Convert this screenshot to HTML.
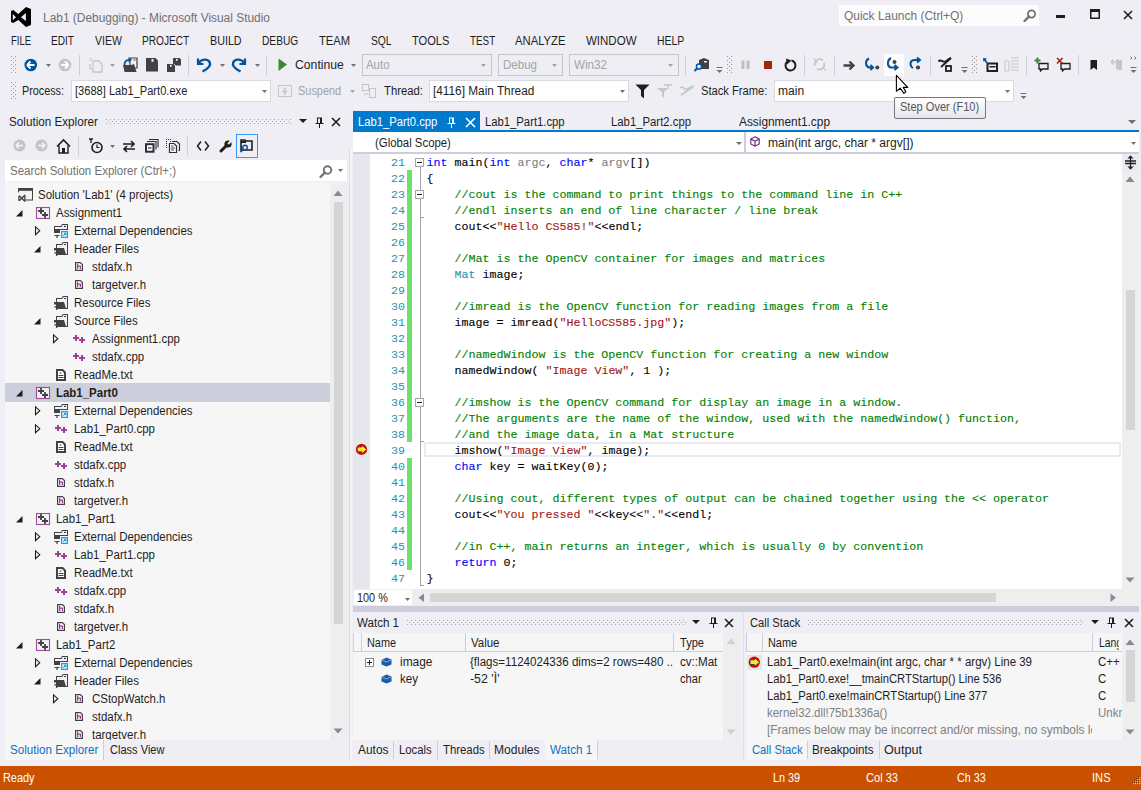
<!DOCTYPE html>
<html><head><meta charset="utf-8"><style>
html,body{margin:0;padding:0;}
body{width:1141px;height:790px;overflow:hidden;position:relative;background:#EEEEF4;font-family:"Liberation Sans",sans-serif;}
div,span,svg{position:absolute;}
span{white-space:pre;display:block;}
svg{overflow:visible;}
</style></head><body>
<svg style="left:10px;top:6px" width="23" height="23" viewBox="0 0 23 23"><path fill="#000" fill-rule="evenodd" d="M1,5 L3.2,4 L8.3,8 L16,1 L21,3 L21,19 L16,21 L8.3,14 L3.2,17 L1,16 Z M2.8,8 L2.8,14.3 L6,11.2 Z M11,11.2 L15.9,7 L15.9,15 Z"/></svg>
<span style="left:43px;top:12px;font-size:12px;line-height:13.80px;color:#717171;font-family:'Liberation Sans', sans-serif;transform:scaleX(0.9931);transform-origin:0 0;">Lab1 (Debugging) - Microsoft Visual Studio</span>
<div style="left:839px;top:5px;width:200px;height:21px;background:#FCFCFD;"></div>
<span style="left:844.2px;top:10px;font-size:12px;line-height:13.80px;color:#717171;font-family:'Liberation Sans', sans-serif;transform:scaleX(0.9966);transform-origin:0 0;">Quick Launch (Ctrl+Q)</span>
<svg style="left:1023px;top:9px" width="14" height="14" viewBox="0 0 14 14"><circle cx="8.5" cy="5" r="3.6" fill="none" stroke="#717171" stroke-width="1.8"/><path d="M6,7.5 L1.5,12" stroke="#717171" stroke-width="2.4" stroke-linecap="round"/></svg>
<div style="left:1056px;top:15px;width:9px;height:3px;background:#1E1E1E;"></div>
<svg style="left:1090px;top:9px" width="10" height="10" viewBox="0 0 10 10"><rect x="0.75" y="0.75" width="8.5" height="8.5" fill="none" stroke="#1E1E1E" stroke-width="1.5"/><rect x="0" y="0" width="10" height="3" fill="#1E1E1E"/></svg>
<svg style="left:1122.5px;top:9.5px" width="10" height="10" viewBox="0 0 10 10"><path d="M1,1 L9,9 M9,1 L1,9" stroke="#1E1E1E" stroke-width="1.6"/></svg>
<span style="left:10.8px;top:35px;font-size:12px;line-height:13.80px;color:#1E1E1E;font-family:'Liberation Sans', sans-serif;transform:scaleX(0.7971);transform-origin:0 0;">FILE</span>
<span style="left:51.1px;top:35px;font-size:12px;line-height:13.80px;color:#1E1E1E;font-family:'Liberation Sans', sans-serif;transform:scaleX(0.8414);transform-origin:0 0;">EDIT</span>
<span style="left:94.7px;top:35px;font-size:12px;line-height:13.80px;color:#1E1E1E;font-family:'Liberation Sans', sans-serif;transform:scaleX(0.8739);transform-origin:0 0;">VIEW</span>
<span style="left:142px;top:35px;font-size:12px;line-height:13.80px;color:#1E1E1E;font-family:'Liberation Sans', sans-serif;transform:scaleX(0.8446);transform-origin:0 0;">PROJECT</span>
<span style="left:209.8px;top:35px;font-size:12px;line-height:13.80px;color:#1E1E1E;font-family:'Liberation Sans', sans-serif;transform:scaleX(0.8941);transform-origin:0 0;">BUILD</span>
<span style="left:261.9px;top:35px;font-size:12px;line-height:13.80px;color:#1E1E1E;font-family:'Liberation Sans', sans-serif;transform:scaleX(0.8506);transform-origin:0 0;">DEBUG</span>
<span style="left:319.3px;top:35px;font-size:12px;line-height:13.80px;color:#1E1E1E;font-family:'Liberation Sans', sans-serif;transform:scaleX(0.9300);transform-origin:0 0;">TEAM</span>
<span style="left:371px;top:35px;font-size:12px;line-height:13.80px;color:#1E1E1E;font-family:'Liberation Sans', sans-serif;transform:scaleX(0.8537);transform-origin:0 0;">SQL</span>
<span style="left:412px;top:35px;font-size:12px;line-height:13.80px;color:#1E1E1E;font-family:'Liberation Sans', sans-serif;transform:scaleX(0.9219);transform-origin:0 0;">TOOLS</span>
<span style="left:469.5px;top:35px;font-size:12px;line-height:13.80px;color:#1E1E1E;font-family:'Liberation Sans', sans-serif;transform:scaleX(0.8217);transform-origin:0 0;">TEST</span>
<span style="left:515.2px;top:35px;font-size:12px;line-height:13.80px;color:#1E1E1E;font-family:'Liberation Sans', sans-serif;transform:scaleX(0.9387);transform-origin:0 0;">ANALYZE</span>
<span style="left:586.2px;top:35px;font-size:12px;line-height:13.80px;color:#1E1E1E;font-family:'Liberation Sans', sans-serif;transform:scaleX(0.9591);transform-origin:0 0;">WINDOW</span>
<span style="left:657.2px;top:35px;font-size:12px;line-height:13.80px;color:#1E1E1E;font-family:'Liberation Sans', sans-serif;transform:scaleX(0.8677);transform-origin:0 0;">HELP</span>
<div style="left:11px;top:56px;width:5px;height:18px;background-image:radial-gradient(circle at 0.5px 0.5px,#999999 0.6px,transparent 0.8px);background-size:4px 4px"></div>
<div style="left:13px;top:58px;width:3px;height:16px;background-image:radial-gradient(circle at 0.5px 0.5px,#999999 0.6px,transparent 0.8px);background-size:4px 4px"></div>
<svg style="left:24px;top:58px" width="14" height="14" viewBox="0 0 14 14"><circle cx="6.75" cy="7" r="6.3" fill="#00539C"/><path d="M3,7 L6.5,3.5 M3,7 L6.5,10.5 M3,7 H10.5" stroke="#fff" stroke-width="1.9" fill="none"/></svg>
<svg style="left:45.5px;top:64px" width="5" height="3" viewBox="0 0 5 3"><path d="M0,0 L5,0 L2.5,3 Z" fill="#717171"/></svg>
<svg style="left:58px;top:58px" width="14" height="14" viewBox="0 0 14 14"><circle cx="7" cy="7" r="6.3" fill="#C4C4C4"/><path d="M10.5,7 L7,3.5 M10.5,7 L7,10.5 M10.5,7 H3" stroke="#fff" stroke-width="1.9" fill="none"/></svg>
<div style="left:79px;top:55px;width:1px;height:20px;background:#CCCEDB;"></div>
<svg style="left:88px;top:57px" width="15" height="16" viewBox="0 0 15 16"><path d="M5,4 H11 L14,7 V15 H5 Z" fill="none" stroke="#C6C6C6" stroke-width="1.3"/><path d="M2,7 V12 H4" fill="none" stroke="#C6C6C6" stroke-width="1.2"/><path d="M1,1 L4,4 M4,1 L1,4" stroke="#C6C6C6" stroke-width="1"/></svg>
<svg style="left:110.0px;top:64px" width="5" height="3" viewBox="0 0 5 3"><path d="M0,0 L5,0 L2.5,3 Z" fill="#A0A0A0"/></svg>
<svg style="left:122px;top:57px" width="16" height="16" viewBox="0 0 16 16"><path d="M8,1 H15 V11 H8 Z" fill="#F5EFF8" stroke="#424242" stroke-width="1.2"/><rect x="11.5" y="2.5" width="2" height="1" fill="#424242"/><path d="M1,8 H9.5 L12,7 L14.5,15 H2.5 Z" fill="#424242"/><path d="M2.5,8 C2.5,4.5 4,2.8 7.5,2.8" stroke="#00539C" stroke-width="1.8" fill="none"/><path d="M6.5,0 L10,2.8 L6.5,5.6 Z" fill="#00539C"/></svg>
<svg style="left:145px;top:57px" width="14" height="16" viewBox="0 0 14 16"><path d="M1,1 H10.5 L13,3.5 V14.5 H1 Z" fill="#424242"/><rect x="6.5" y="2" width="2" height="2.8" fill="#EEEEF4"/></svg>
<svg style="left:166px;top:56px" width="16" height="17" viewBox="0 0 16 17"><path d="M1,8 H7.5 L9,9.5 V16 H1 Z" fill="#424242"/><rect x="4" y="8.8" width="1.6" height="2" fill="#EEEEF4"/><path d="M7,2 H13.5 L15,3.5 V9.5 H9.5 L8.5,8 H7 Z" fill="#424242"/><rect x="10" y="2.8" width="1.6" height="2" fill="#EEEEF4"/><path d="M9.5,16 V9.5" stroke="#EEEEF4" stroke-width="0.8"/></svg>
<div style="left:188px;top:55px;width:1px;height:20px;background:#CCCEDB;"></div>
<svg style="left:196px;top:57px" width="16" height="16" viewBox="0 0 16 16"><path d="M2,1.5 V7 H7.5" stroke="#00539C" stroke-width="2.2" fill="none"/><path d="M2.8,6.2 C5,2 12,1.2 13.8,5.5 C15,8.5 11.5,12 6.5,14.5" stroke="#00539C" stroke-width="2.4" fill="none"/></svg>
<svg style="left:219.5px;top:64px" width="5" height="3" viewBox="0 0 5 3"><path d="M0,0 L5,0 L2.5,3 Z" fill="#717171"/></svg>
<svg style="left:231px;top:57px" width="16" height="16" viewBox="0 0 16 16"><path d="M14,1.5 V7 H8.5" stroke="#00539C" stroke-width="2.2" fill="none"/><path d="M13.2,6.2 C11,2 4,1.2 2.2,5.5 C1,8.5 4.5,12 9.5,14.5" stroke="#00539C" stroke-width="2.4" fill="none"/></svg>
<svg style="left:254.5px;top:64px" width="5" height="3" viewBox="0 0 5 3"><path d="M0,0 L5,0 L2.5,3 Z" fill="#717171"/></svg>
<div style="left:266px;top:55px;width:1px;height:20px;background:#CCCEDB;"></div>
<svg style="left:278px;top:58px" width="10" height="14" viewBox="0 0 10 14"><path d="M0.5,0.5 L9,6.5 L0.5,13 Z" fill="#388A34"/></svg>
<span style="left:295.3px;top:59px;font-size:12px;line-height:13.80px;color:#1E1E1E;font-family:'Liberation Sans', sans-serif;transform:scaleX(1.0180);transform-origin:0 0;">Continue</span>
<svg style="left:350.5px;top:64px" width="5" height="3" viewBox="0 0 5 3"><path d="M0,0 L5,0 L2.5,3 Z" fill="#717171"/></svg>
<div style="left:362px;top:54px;width:130px;height:22px;background:transparent;border:1px solid #C6C6C6;box-sizing:border-box"></div>
<span style="left:366.3px;top:59px;font-size:12px;line-height:13.80px;color:#A2A4A5;font-family:'Liberation Sans', sans-serif;transform:scaleX(0.9520);transform-origin:0 0;">Auto</span>
<svg style="left:481.0px;top:64px" width="5" height="3" viewBox="0 0 5 3"><path d="M0,0 L5,0 L2.5,3 Z" fill="#A2A4A5"/></svg>
<div style="left:498px;top:54px;width:65px;height:22px;background:transparent;border:1px solid #C6C6C6;box-sizing:border-box"></div>
<span style="left:502.6px;top:59px;font-size:12px;line-height:13.80px;color:#A2A4A5;font-family:'Liberation Sans', sans-serif;transform:scaleX(0.9615);transform-origin:0 0;">Debug</span>
<svg style="left:552.0px;top:64px" width="5" height="3" viewBox="0 0 5 3"><path d="M0,0 L5,0 L2.5,3 Z" fill="#A2A4A5"/></svg>
<div style="left:569px;top:54px;width:110px;height:22px;background:transparent;border:1px solid #C6C6C6;box-sizing:border-box"></div>
<span style="left:573.5px;top:59px;font-size:12px;line-height:13.80px;color:#A2A4A5;font-family:'Liberation Sans', sans-serif;transform:scaleX(0.9702);transform-origin:0 0;">Win32</span>
<svg style="left:668.0px;top:64px" width="5" height="3" viewBox="0 0 5 3"><path d="M0,0 L5,0 L2.5,3 Z" fill="#A2A4A5"/></svg>
<div style="left:685px;top:55px;width:1px;height:20px;background:#CCCEDB;"></div>
<svg style="left:694px;top:57px" width="16" height="15" viewBox="0 0 16 15"><path d="M5,3 L10,1 L15,3 V12 H5 Z" fill="#424242"/><rect x="10" y="4" width="3" height="1.5" fill="#EEEEF4"/><circle cx="5" cy="9.5" r="2.6" fill="#EEEEF4" stroke="#00539C" stroke-width="1.5"/><path d="M3,11.5 L0.5,14" stroke="#00539C" stroke-width="2"/></svg>
<svg style="left:716px;top:67px" width="7" height="7" viewBox="0 0 7 7"><rect x="0.5" y="0" width="6" height="1" fill="#717171"/><path d="M0.5,3 L6.5,3 L3.5,6 Z" fill="#717171"/></svg>
<div style="left:727px;top:56px;width:5px;height:18px;background-image:radial-gradient(circle at 0.5px 0.5px,#999999 0.6px,transparent 0.8px);background-size:4px 4px"></div>
<div style="left:729px;top:58px;width:3px;height:16px;background-image:radial-gradient(circle at 0.5px 0.5px,#999999 0.6px,transparent 0.8px);background-size:4px 4px"></div>
<svg style="left:741px;top:60px" width="10" height="10" viewBox="0 0 10 10"><rect x="0.5" y="0.5" width="3" height="8.5" fill="#BDBDBD"/><rect x="5.5" y="0.5" width="3" height="8.5" fill="#BDBDBD"/></svg>
<div style="left:764px;top:61px;width:8px;height:8px;background:#A1260D;"></div>
<svg style="left:783px;top:58px" width="14" height="14" viewBox="0 0 14 14"><path d="M4.5,3.5 A5,5 0 1 0 8.5,2.6" stroke="#1E1E1E" stroke-width="2" fill="none"/><path d="M3,0.5 L8.5,2.5 L4,6.5 Z" fill="#1E1E1E"/></svg>
<div style="left:804px;top:55px;width:1px;height:20px;background:#CCCEDB;"></div>
<svg style="left:812px;top:57px" width="16" height="15" viewBox="0 0 16 15"><path d="M3,9 A5,5 0 0 1 11,3.5 M12,6 A5,5 0 0 1 5,12" stroke="#C6C6C6" stroke-width="1.8" fill="none"/><path d="M2,1 L5,6 M11,10 L14,14" stroke="#C6C6C6" stroke-width="1.2"/></svg>
<div style="left:834px;top:55px;width:1px;height:20px;background:#CCCEDB;"></div>
<svg style="left:843px;top:60px" width="14" height="11" viewBox="0 0 14 11"><path d="M0.5,5.5 H10.5 M6.5,1.5 L10.5,5.5 L6.5,9.5" stroke="#424242" stroke-width="2.3" fill="none"/></svg>
<svg style="left:864px;top:57px" width="16" height="15" viewBox="0 0 16 15"><path d="M5,1.5 C1,3.5 1,9 5,10.5 L9,10.5 M6.5,8 L9,10.5 L6.5,13" stroke="#00539C" stroke-width="2" fill="none"/><circle cx="13.3" cy="10.5" r="2" fill="#424242"/></svg>
<div style="left:884px;top:54px;width:20px;height:22px;background:#FDFDFD;"></div>
<svg style="left:887px;top:57px" width="15" height="16" viewBox="0 0 15 16"><path d="M4,1 C0,3 0,9 3.5,10.5 L10,10.5 M7.5,8 L10.5,10.5 L7.5,13" stroke="#00539C" stroke-width="2" fill="none"/><circle cx="7.5" cy="5" r="2" fill="#424242"/></svg>
<svg style="left:909px;top:57px" width="14" height="15" viewBox="0 0 14 15"><path d="M4,11 C0.5,9 0.5,3.5 5,3 L11,3 M8,0.5 L11,3 L8,5.5" stroke="#00539C" stroke-width="2" fill="none"/><circle cx="9" cy="10.5" r="2.1" fill="#424242"/></svg>
<div style="left:930px;top:55px;width:1px;height:20px;background:#CCCEDB;"></div>
<svg style="left:937px;top:57px" width="17" height="16" viewBox="0 0 17 16"><path d="M1.5,4.5 C4,1.5 6,6 8.5,4.5 C11,3 12,1.5 14,1" stroke="#1E1E1E" stroke-width="2" fill="none"/><path d="M4,10 L14,1" stroke="#1E1E1E" stroke-width="1.8"/><rect x="9" y="9" width="5" height="5" fill="none" stroke="#1E1E1E" stroke-width="1.8"/></svg>
<svg style="left:961px;top:67px" width="7" height="7" viewBox="0 0 7 7"><rect x="0.5" y="0" width="6" height="1" fill="#717171"/><path d="M0.5,3 L6.5,3 L3.5,6 Z" fill="#717171"/></svg>
<div style="left:972px;top:56px;width:5px;height:18px;background-image:radial-gradient(circle at 0.5px 0.5px,#999999 0.6px,transparent 0.8px);background-size:4px 4px"></div>
<div style="left:974px;top:58px;width:3px;height:16px;background-image:radial-gradient(circle at 0.5px 0.5px,#999999 0.6px,transparent 0.8px);background-size:4px 4px"></div>
<svg style="left:983px;top:58px" width="15" height="14" viewBox="0 0 15 14"><rect x="4.5" y="5.5" width="9.5" height="7.5" fill="none" stroke="#1E1E1E" stroke-width="2"/><rect x="6.5" y="8" width="6" height="1.5" fill="#1E1E1E"/><path d="M1,1 L5,6" stroke="#00539C" stroke-width="1.6"/><path d="M0,0 L4,0.5 L0.5,4 Z" fill="#00539C"/></svg>
<svg style="left:1004px;top:57px" width="16" height="15" viewBox="0 0 16 15"><path d="M1,4 H5 V14 H1 Z M7,1 H15 M7,4 H15 M7,7 H15 M7,10 H15 M7,13 H15" stroke="#C6C6C6" stroke-width="1" fill="none"/></svg>
<div style="left:1026px;top:55px;width:1px;height:20px;background:#CCCEDB;"></div>
<svg style="left:1034px;top:57px" width="16" height="15" viewBox="0 0 16 15"><path d="M5,6.5 H14 V12 H8.5 L6.5,14 V12 H5 Z" fill="none" stroke="#1E1E1E" stroke-width="1.3"/><path d="M0.5,3.5 H6.5 M3.5,0.5 V6.5" stroke="#388A34" stroke-width="2"/></svg>
<svg style="left:1056px;top:57px" width="16" height="15" viewBox="0 0 16 15"><path d="M5,6.5 H14 V12 H8.5 L6.5,14 V12 H5 Z" fill="none" stroke="#1E1E1E" stroke-width="1.3"/><path d="M1,1 L6.5,6.5 M6.5,1 L1,6.5" stroke="#A1260D" stroke-width="1.6"/></svg>
<div style="left:1078px;top:55px;width:1px;height:20px;background:#CCCEDB;"></div>
<svg style="left:1090px;top:60px" width="8" height="11" viewBox="0 0 8 11"><path d="M0.5,0 H7 V10 L3.75,7.5 L0.5,10 Z" fill="#1E1E1E"/></svg>
<svg style="left:1110px;top:57px" width="13" height="16" viewBox="0 0 13 16"><path d="M6,2 V12 L9,13 V3 Z" fill="#C6C6C6"/><path d="M1,5 H6 M1,5 L3.5,2.5 M1,5 L3.5,7.5" stroke="#C6C6C6" stroke-width="1.5"/><rect x="8" y="3" width="4" height="10" fill="#C6C6C6"/></svg>
<svg style="left:1130px;top:56px" width="8" height="5" viewBox="0 0 8 5"><path d="M0.5,0.5 L2,2 L0.5,3.5 M4.5,0.5 L6,2 L4.5,3.5" stroke="#717171" stroke-width="1" fill="none"/></svg>
<svg style="left:1130px;top:67px" width="7" height="7" viewBox="0 0 7 7"><rect x="0.5" y="0" width="6" height="1" fill="#717171"/><path d="M0.5,3 L6.5,3 L3.5,6 Z" fill="#717171"/></svg>
<div style="left:11px;top:82px;width:5px;height:18px;background-image:radial-gradient(circle at 0.5px 0.5px,#999999 0.6px,transparent 0.8px);background-size:4px 4px"></div>
<div style="left:13px;top:84px;width:3px;height:16px;background-image:radial-gradient(circle at 0.5px 0.5px,#999999 0.6px,transparent 0.8px);background-size:4px 4px"></div>
<span style="left:22.4px;top:85px;font-size:12px;line-height:13.80px;color:#1E1E1E;font-family:'Liberation Sans', sans-serif;transform:scaleX(0.8997);transform-origin:0 0;">Process:</span>
<div style="left:71px;top:80px;width:200px;height:22px;background:#FFFFFF;border:1px solid #DADAE0;box-sizing:border-box"></div>
<span style="left:74.9px;top:85px;font-size:12px;line-height:13.80px;color:#1E1E1E;font-family:'Liberation Sans', sans-serif;transform:scaleX(0.9248);transform-origin:0 0;">[3688] Lab1_Part0.exe</span>
<svg style="left:261.5px;top:90px" width="5" height="3" viewBox="0 0 5 3"><path d="M0,0 L5,0 L2.5,3 Z" fill="#717171"/></svg>
<svg style="left:278px;top:84px" width="15" height="14" viewBox="0 0 15 14"><rect x="0.5" y="1.5" width="13" height="11" fill="none" stroke="#C6C6C6" stroke-width="1"/><path d="M8,3.5 L5,7.5 H8.5 L6,11" stroke="#C6C6C6" stroke-width="1.3" fill="none"/></svg>
<span style="left:298.4px;top:85px;font-size:12px;line-height:13.80px;color:#A2A4A5;font-family:'Liberation Sans', sans-serif;transform:scaleX(0.9119);transform-origin:0 0;">Suspend</span>
<svg style="left:349.5px;top:90px" width="5" height="3" viewBox="0 0 5 3"><path d="M0,0 L5,0 L2.5,3 Z" fill="#A2A4A5"/></svg>
<svg style="left:362px;top:84px" width="15" height="14" viewBox="0 0 15 14"><rect x="0.5" y="0.5" width="6" height="6" fill="none" stroke="#C6C6C6"/><rect x="7.5" y="4.5" width="6" height="9" fill="none" stroke="#C6C6C6"/><path d="M2,10 H6" stroke="#C6C6C6"/></svg>
<span style="left:383.6px;top:85px;font-size:12px;line-height:13.80px;color:#1E1E1E;font-family:'Liberation Sans', sans-serif;transform:scaleX(0.9430);transform-origin:0 0;">Thread:</span>
<div style="left:429px;top:80px;width:200px;height:22px;background:#FFFFFF;border:1px solid #DADAE0;box-sizing:border-box"></div>
<span style="left:433px;top:85px;font-size:12px;line-height:13.80px;color:#1E1E1E;font-family:'Liberation Sans', sans-serif;transform:scaleX(0.9839);transform-origin:0 0;">[4116] Main Thread</span>
<svg style="left:619.5px;top:90px" width="5" height="3" viewBox="0 0 5 3"><path d="M0,0 L5,0 L2.5,3 Z" fill="#717171"/></svg>
<svg style="left:635px;top:84px" width="15" height="15" viewBox="0 0 15 15"><path d="M0.5,0.5 H14.5 L9,6 V14.5 L6,12 V6 Z" fill="#1E1E1E"/></svg>
<svg style="left:656px;top:84px" width="17" height="15" viewBox="0 0 17 15"><path d="M1,4 H12 L8,8 V14 L6,12 V8 Z" fill="#C6C6C6"/><path d="M8,1 H16 M12,1 V5" stroke="#C6C6C6" stroke-width="1.3"/></svg>
<svg style="left:679px;top:84px" width="16" height="15" viewBox="0 0 16 15"><path d="M1,4 C4,1 6,7 8.5,5 C11,3 12,2 15,2 M2,11 L14,3" stroke="#C6C6C6" stroke-width="1.6" fill="none"/></svg>
<span style="left:701.3px;top:85px;font-size:12px;line-height:13.80px;color:#1E1E1E;font-family:'Liberation Sans', sans-serif;transform:scaleX(0.9292);transform-origin:0 0;">Stack Frame:</span>
<div style="left:774px;top:80px;width:240px;height:22px;background:#FFFFFF;border:1px solid #DADAE0;box-sizing:border-box"></div>
<span style="left:778.3px;top:85px;font-size:12px;line-height:13.80px;color:#1E1E1E;font-family:'Liberation Sans', sans-serif;transform:scaleX(1.0035);transform-origin:0 0;">main</span>
<svg style="left:1004.5px;top:90px" width="5" height="3" viewBox="0 0 5 3"><path d="M0,0 L5,0 L2.5,3 Z" fill="#717171"/></svg>
<svg style="left:1020px;top:93px" width="7" height="7" viewBox="0 0 7 7"><rect x="0.5" y="0" width="6" height="1" fill="#717171"/><path d="M0.5,3 L6.5,3 L3.5,6 Z" fill="#717171"/></svg>
<span style="left:9.2px;top:116px;font-size:12px;line-height:13.80px;color:#1E1E1E;font-family:'Liberation Sans', sans-serif;transform:scaleX(0.9739);transform-origin:0 0;">Solution Explorer</span>
<div style="left:106px;top:119px;width:186px;height:6px;background-image:radial-gradient(circle at 0.5px 0.5px,#A8A8B0 0.6px,transparent 0.8px);background-size:4px 4px"></div>
<div style="left:108px;top:121px;width:184px;height:4px;background-image:radial-gradient(circle at 0.5px 0.5px,#A8A8B0 0.6px,transparent 0.8px);background-size:4px 4px"></div>
<svg style="left:299px;top:119px" width="9" height="5" viewBox="0 0 9 5"><path d="M0,0 H8 L4,4 Z" fill="#1E1E1E"/></svg>
<svg style="left:315px;top:117px" width="9" height="11" viewBox="0 0 9 11"><path d="M2,0.5 H7 V6 H8.5 V7 H5 V11 H4 V7 H0.5 V6 H2 Z M3,1.5 V6 H6 V1.5 Z" fill="#1E1E1E" fill-rule="evenodd"/><rect x="5" y="1" width="1" height="5" fill="#1E1E1E"/></svg>
<svg style="left:331px;top:117px" width="10" height="10" viewBox="0 0 10 10"><path d="M1,1 L9,9 M9,1 L1,9" stroke="#1E1E1E" stroke-width="1.6"/></svg>
<svg style="left:13px;top:139px" width="14" height="14" viewBox="0 0 14 14"><circle cx="6.5" cy="6.5" r="6" fill="#C4C4C4"/><path d="M3,6.5 L6,3.5 M3,6.5 L6,9.5 M3,6.5 H10" stroke="#F5F5F5" stroke-width="1.7" fill="none"/></svg>
<svg style="left:35px;top:139px" width="14" height="14" viewBox="0 0 14 14"><circle cx="6.5" cy="6.5" r="6" fill="#C4C4C4"/><path d="M10,6.5 L7,3.5 M10,6.5 L7,9.5 M10,6.5 H3" stroke="#F5F5F5" stroke-width="1.7" fill="none"/></svg>
<svg style="left:56px;top:139px" width="16" height="15" viewBox="0 0 16 15"><path d="M1,7.5 L7.5,1 L14,7.5" stroke="#1E1E1E" stroke-width="1.6" fill="none"/><path d="M3,6.5 V14 H12 V6.5" stroke="#1E1E1E" stroke-width="1.4" fill="none"/><rect x="6" y="9" width="3" height="5" fill="#1E1E1E"/></svg>
<div style="left:78px;top:136px;width:1px;height:20px;background:#CCCEDB;"></div>
<svg style="left:88px;top:138px" width="16" height="16" viewBox="0 0 16 16"><circle cx="9" cy="9.5" r="5" fill="none" stroke="#1E1E1E" stroke-width="1.6"/><path d="M9,6.5 V9.5 H11.5" stroke="#1E1E1E" stroke-width="1.2" fill="none"/><path d="M1,1 H5 M3,1 V5" stroke="#1E1E1E" stroke-width="1.3"/></svg>
<svg style="left:109.5px;top:145px" width="5" height="3" viewBox="0 0 5 3"><path d="M0,0 L5,0 L2.5,3 Z" fill="#717171"/></svg>
<svg style="left:122px;top:140px" width="14" height="13" viewBox="0 0 14 13"><path d="M1,4 H12 M9,1 L12,4 L9,7 M13,9 H2 M5,6 L2,9 L5,12" stroke="#1E1E1E" stroke-width="1.6" fill="none"/></svg>
<svg style="left:144px;top:138px" width="16" height="16" viewBox="0 0 16 16"><rect x="2" y="6.2" width="7.5" height="7.5" fill="#FFFFFF" stroke="#2D2D30" stroke-width="2"/><path d="M3,3.5 H12 V11.5 M5,1.5 H14 V9.5" stroke="#2D2D30" stroke-width="1.1" fill="none"/><rect x="4" y="9.3" width="3.5" height="1.3" fill="#00539C"/></svg>
<svg style="left:165px;top:138px" width="16" height="16" viewBox="0 0 16 16"><path d="M7,3.5 H12 L14.5,6 V12.5 H13.5" stroke="#2D2D30" stroke-width="1.1" fill="none"/><path d="M4.5,5.5 H9 L11.5,8 V14.5 H4.5 Z" fill="#FFFFFF" stroke="#2D2D30" stroke-width="1.2"/><path d="M6,8 H8.5 M6,10 H10 M6,12 H9" stroke="#2D2D30" stroke-width="0.9"/><g fill="#2D2D30"><rect x="1" y="1" width="1" height="1"/><rect x="3" y="1" width="1" height="1"/><rect x="5" y="1" width="1" height="1"/><rect x="1" y="3" width="1" height="1"/><rect x="5" y="3" width="1" height="1"/><rect x="1" y="5" width="1" height="1"/><rect x="1" y="7" width="1" height="1"/><rect x="1" y="9" width="1" height="1"/></g></svg>
<div style="left:187px;top:136px;width:1px;height:20px;background:#CCCEDB;"></div>
<svg style="left:196px;top:140px" width="14" height="12" viewBox="0 0 14 12"><path d="M5,1.5 L1.5,6 L5,10.5 M9,1.5 L12.5,6 L9,10.5" stroke="#1E1E1E" stroke-width="1.5" fill="none"/></svg>
<svg style="left:219px;top:139px" width="14" height="14" viewBox="0 0 14 14"><path d="M2,12 L7,7" stroke="#1E1E1E" stroke-width="3" stroke-linecap="round"/><circle cx="9" cy="5" r="3.6" fill="#1E1E1E"/><path d="M9,5 L13,1" stroke="#EEEEF4" stroke-width="2"/></svg>
<div style="left:236px;top:134px;width:22px;height:24px;background:#EEEEF4;border:1px solid #3399FF;box-sizing:border-box"></div>
<svg style="left:239px;top:137px" width="17" height="17" viewBox="0 0 17 17"><path d="M2,3 H6 L7,4 H13 V13 H2 Z" fill="none" stroke="#1E1E1E" stroke-width="1.6"/><rect x="2" y="4" width="5" height="2" fill="#1E1E1E"/><circle cx="6" cy="10.5" r="2.3" fill="#EEEEF4" stroke="#00539C" stroke-width="1.4"/><path d="M4.3,12.2 L1.5,15" stroke="#00539C" stroke-width="1.8"/></svg>
<div style="left:5px;top:160px;width:342px;height:21px;background:#FFFFFF;"></div>
<span style="left:10.4px;top:165px;font-size:12px;line-height:13.80px;color:#717171;font-family:'Liberation Sans', sans-serif;transform:scaleX(0.9592);transform-origin:0 0;">Search Solution Explorer (Ctrl+;)</span>
<svg style="left:318px;top:164px" width="16" height="16" viewBox="0 0 16 16"><circle cx="9.5" cy="6" r="3.8" fill="none" stroke="#717171" stroke-width="1.9"/><path d="M7,8.5 L2.5,13" stroke="#717171" stroke-width="2.4" stroke-linecap="round"/></svg>
<svg style="left:338.0px;top:169px" width="5" height="3" viewBox="0 0 5 3"><path d="M0,0 L5,0 L2.5,3 Z" fill="#717171"/></svg>
<div style="left:5px;top:182px;width:325px;height:558px;background:#F6F6F6;"></div>
<div style="left:330px;top:185px;width:17px;height:555px;background:#EEEEEF;"></div>
<svg style="left:333px;top:190px" width="11" height="7" viewBox="0 0 11 7"><path d="M0.5,6 L5,0.5 L9.5,6 Z" fill="#868999"/></svg>
<div style="left:334px;top:202px;width:9px;height:422px;background:#D5D5D5;"></div>
<svg style="left:333px;top:728px" width="11" height="6" viewBox="0 0 11 6"><path d="M0.5,0.5 H9.5 L5,5.5 Z" fill="#868999"/></svg>
<div style="left:5px;top:383px;width:325px;height:19px;background:#CCCEDB;"></div>
<div style="left:5px;top:182px;width:325px;height:558px;overflow:hidden">
<svg style="left:12.5px;top:6.0px" width="15" height="14" viewBox="0 0 15 14"><rect x="0.5" y="0.5" width="14" height="11.5" fill="#F5EFF8" stroke="#424242" stroke-width="1"/><rect x="0" y="0" width="15" height="2.8" fill="#424242"/><rect x="0" y="4.5" width="7.5" height="9.5" fill="#F6F6F6"/><path fill="#424242" fill-rule="evenodd" d="M0.3,8 L1.6,7.2 L3.8,9.2 L6.5,6.5 L7.5,7 V13.5 L6.5,14 L3.8,11.3 L1.6,13.3 L0.3,12.5 Z M1.6,9 V11.5 L2.9,10.2 Z M4.8,10.2 L6.2,8.8 V11.7 Z"/></svg>
<span style="left:33.0px;top:7.0px;font-size:12px;line-height:13.80px;color:#1E1E1E;font-family:'Liberation Sans', sans-serif;transform:scaleX(0.9550);transform-origin:0 0;">Solution &#x27;Lab1&#x27; (4 projects)</span>
<svg style="left:11.0px;top:27.5px" width="8" height="7" viewBox="0 0 8 7"><path d="M0,6.5 H6.5 V0 Z" fill="#1E1E1E"/></svg>
<svg style="left:31.0px;top:25.0px" width="14" height="12" viewBox="0 0 14 12"><rect x="0.5" y="0.5" width="13" height="11" fill="#F5EFF8" stroke="#9B4F96" stroke-width="1.1"/><path d="M2,4 H8 M5,1 V7 M6,8 H12 M9,5 V11" stroke="#424242" stroke-width="1.8"/></svg>
<span style="left:51.0px;top:25.0px;font-size:12px;line-height:13.80px;color:#1E1E1E;font-family:'Liberation Sans', sans-serif;transform:scaleX(0.9550);transform-origin:0 0;">Assignment1</span>
<svg style="left:28.5px;top:44.0px" width="7" height="10" viewBox="0 0 7 10"><path d="M1.5,0.8 L5.8,4.7 L1.5,8.7 Z" fill="none" stroke="#1E1E1E" stroke-width="1.1"/></svg>
<svg style="left:49.0px;top:42.0px" width="14" height="14" viewBox="0 0 14 14"><path d="M0,2 H7 L8,0 H14 V6 H0 Z" fill="#424242"/><path d="M1,3 H7.5 L8.5,1 H13 V5 H1 Z" fill="#F5EFF8"/><rect x="10" y="1.8" width="2" height="1.2" fill="#424242"/><rect x="0" y="6" width="6" height="3" fill="#424242"/><path d="M0.5,11.5 H5.5 M3,11.5 V14" stroke="#424242" stroke-width="1.2"/><rect x="7.65" y="7.65" width="5.7" height="5.7" fill="#FFFFFF" stroke="#1BA1E2" stroke-width="1.3"/><path d="M9.3,11.7 L11.8,9.2 M9.8,9.2 H11.8 V11.2" stroke="#1BA1E2" stroke-width="1.1" fill="none"/></svg>
<span style="left:69.0px;top:43.0px;font-size:12px;line-height:13.80px;color:#1E1E1E;font-family:'Liberation Sans', sans-serif;transform:scaleX(0.9550);transform-origin:0 0;">External Dependencies</span>
<svg style="left:29.0px;top:63.5px" width="8" height="7" viewBox="0 0 8 7"><path d="M0,6.5 H6.5 V0 Z" fill="#1E1E1E"/></svg>
<svg style="left:49.0px;top:60.0px" width="14" height="14" viewBox="0 0 14 14"><path d="M2,2 H7.5 L9,0 H14 V13 H2 Z" fill="#424242"/><path d="M3,3 H8 L9.5,1 H13 V12 H3 Z" fill="#F5EFF8"/><rect x="10" y="2" width="2" height="1" fill="#424242"/><path d="M0,6 H10 L12,12.5 H3 V8.5 H0 Z" fill="#424242"/><path d="M0.3,10.8 H5 M2.6,10.8 V14" stroke="#424242" stroke-width="1.3"/></svg>
<span style="left:69.0px;top:61.0px;font-size:12px;line-height:13.80px;color:#1E1E1E;font-family:'Liberation Sans', sans-serif;transform:scaleX(0.9550);transform-origin:0 0;">Header Files</span>
<svg style="left:70.0px;top:80.0px" width="8" height="9" viewBox="0 0 8 9"><path d="M0.6,0.6 H5.4 L7.4,2.6 V8.4 H0.6 Z" fill="#FFFFFF" stroke="#424242" stroke-width="1.2"/><path d="M2.6,1.8 V7 M2.6,4.2 H5.4 V7" stroke="#9B3F98" stroke-width="1.3" fill="none"/></svg>
<span style="left:87.0px;top:79.0px;font-size:12px;line-height:13.80px;color:#1E1E1E;font-family:'Liberation Sans', sans-serif;transform:scaleX(0.9550);transform-origin:0 0;">stdafx.h</span>
<svg style="left:70.0px;top:98.0px" width="8" height="9" viewBox="0 0 8 9"><path d="M0.6,0.6 H5.4 L7.4,2.6 V8.4 H0.6 Z" fill="#FFFFFF" stroke="#424242" stroke-width="1.2"/><path d="M2.6,1.8 V7 M2.6,4.2 H5.4 V7" stroke="#9B3F98" stroke-width="1.3" fill="none"/></svg>
<span style="left:87.0px;top:97.0px;font-size:12px;line-height:13.80px;color:#1E1E1E;font-family:'Liberation Sans', sans-serif;transform:scaleX(0.9550);transform-origin:0 0;">targetver.h</span>
<svg style="left:49.0px;top:114.0px" width="14" height="14" viewBox="0 0 14 14"><path d="M2,2 H7.5 L9,0 H14 V13 H2 Z" fill="#424242"/><path d="M3,3 H8 L9.5,1 H13 V12 H3 Z" fill="#F5EFF8"/><rect x="10" y="2" width="2" height="1" fill="#424242"/><path d="M0,6 H10 L12,12.5 H3 V8.5 H0 Z" fill="#424242"/><path d="M0.3,10.8 H5 M2.6,10.8 V14" stroke="#424242" stroke-width="1.3"/></svg>
<span style="left:69.0px;top:115.0px;font-size:12px;line-height:13.80px;color:#1E1E1E;font-family:'Liberation Sans', sans-serif;transform:scaleX(0.9550);transform-origin:0 0;">Resource Files</span>
<svg style="left:29.0px;top:135.5px" width="8" height="7" viewBox="0 0 8 7"><path d="M0,6.5 H6.5 V0 Z" fill="#1E1E1E"/></svg>
<svg style="left:49.0px;top:132.0px" width="14" height="14" viewBox="0 0 14 14"><path d="M2,2 H7.5 L9,0 H14 V13 H2 Z" fill="#424242"/><path d="M3,3 H8 L9.5,1 H13 V12 H3 Z" fill="#F5EFF8"/><rect x="10" y="2" width="2" height="1" fill="#424242"/><path d="M0,6 H10 L12,12.5 H3 V8.5 H0 Z" fill="#424242"/><path d="M0.3,10.8 H5 M2.6,10.8 V14" stroke="#424242" stroke-width="1.3"/></svg>
<span style="left:69.0px;top:133.0px;font-size:12px;line-height:13.80px;color:#1E1E1E;font-family:'Liberation Sans', sans-serif;transform:scaleX(0.9550);transform-origin:0 0;">Source Files</span>
<svg style="left:46.5px;top:152.0px" width="7" height="10" viewBox="0 0 7 10"><path d="M1.5,0.8 L5.8,4.7 L1.5,8.7 Z" fill="none" stroke="#1E1E1E" stroke-width="1.1"/></svg>
<svg style="left:68.0px;top:153.0px" width="12" height="8" viewBox="0 0 12 8"><g fill="#9B3F98"><rect x="0" y="2" width="6" height="2"/><rect x="2" y="0" width="2" height="6"/><rect x="6" y="4" width="6" height="2"/><rect x="8" y="2" width="2" height="6"/></g></svg>
<span style="left:87.0px;top:151.0px;font-size:12px;line-height:13.80px;color:#1E1E1E;font-family:'Liberation Sans', sans-serif;transform:scaleX(0.9550);transform-origin:0 0;">Assignment1.cpp</span>
<svg style="left:68.0px;top:171.0px" width="12" height="8" viewBox="0 0 12 8"><g fill="#9B3F98"><rect x="0" y="2" width="6" height="2"/><rect x="2" y="0" width="2" height="6"/><rect x="6" y="4" width="6" height="2"/><rect x="8" y="2" width="2" height="6"/></g></svg>
<span style="left:87.0px;top:169.0px;font-size:12px;line-height:13.80px;color:#1E1E1E;font-family:'Liberation Sans', sans-serif;transform:scaleX(0.9550);transform-origin:0 0;">stdafx.cpp</span>
<svg style="left:51.0px;top:187.0px" width="10" height="12" viewBox="0 0 10 12"><path d="M1,1 H6.5 L9,3.5 V11 H1 Z" fill="#FFFFFF" stroke="#424242" stroke-width="2"/><path d="M3.5,4 H5.5 M2.5,6.5 H7.5 M2.5,8.5 H7.5" stroke="#424242" stroke-width="1"/></svg>
<span style="left:69.0px;top:187.0px;font-size:12px;line-height:13.80px;color:#1E1E1E;font-family:'Liberation Sans', sans-serif;transform:scaleX(0.9550);transform-origin:0 0;">ReadMe.txt</span>
<svg style="left:11.0px;top:207.5px" width="8" height="7" viewBox="0 0 8 7"><path d="M0,6.5 H6.5 V0 Z" fill="#1E1E1E"/></svg>
<svg style="left:31.0px;top:205.0px" width="14" height="12" viewBox="0 0 14 12"><rect x="0.5" y="0.5" width="13" height="11" fill="#F5EFF8" stroke="#9B4F96" stroke-width="1.1"/><path d="M2,4 H8 M5,1 V7 M6,8 H12 M9,5 V11" stroke="#424242" stroke-width="1.8"/></svg>
<span style="left:51.0px;top:205.0px;font-size:12px;line-height:13.80px;color:#1E1E1E;font-family:'Liberation Sans', sans-serif;font-weight:bold;transform:scaleX(0.9550);transform-origin:0 0;">Lab1_Part0</span>
<svg style="left:28.5px;top:224.0px" width="7" height="10" viewBox="0 0 7 10"><path d="M1.5,0.8 L5.8,4.7 L1.5,8.7 Z" fill="none" stroke="#1E1E1E" stroke-width="1.1"/></svg>
<svg style="left:49.0px;top:222.0px" width="14" height="14" viewBox="0 0 14 14"><path d="M0,2 H7 L8,0 H14 V6 H0 Z" fill="#424242"/><path d="M1,3 H7.5 L8.5,1 H13 V5 H1 Z" fill="#F5EFF8"/><rect x="10" y="1.8" width="2" height="1.2" fill="#424242"/><rect x="0" y="6" width="6" height="3" fill="#424242"/><path d="M0.5,11.5 H5.5 M3,11.5 V14" stroke="#424242" stroke-width="1.2"/><rect x="7.65" y="7.65" width="5.7" height="5.7" fill="#FFFFFF" stroke="#1BA1E2" stroke-width="1.3"/><path d="M9.3,11.7 L11.8,9.2 M9.8,9.2 H11.8 V11.2" stroke="#1BA1E2" stroke-width="1.1" fill="none"/></svg>
<span style="left:69.0px;top:223.0px;font-size:12px;line-height:13.80px;color:#1E1E1E;font-family:'Liberation Sans', sans-serif;transform:scaleX(0.9550);transform-origin:0 0;">External Dependencies</span>
<svg style="left:28.5px;top:242.0px" width="7" height="10" viewBox="0 0 7 10"><path d="M1.5,0.8 L5.8,4.7 L1.5,8.7 Z" fill="none" stroke="#1E1E1E" stroke-width="1.1"/></svg>
<svg style="left:50.0px;top:243.0px" width="12" height="8" viewBox="0 0 12 8"><g fill="#9B3F98"><rect x="0" y="2" width="6" height="2"/><rect x="2" y="0" width="2" height="6"/><rect x="6" y="4" width="6" height="2"/><rect x="8" y="2" width="2" height="6"/></g></svg>
<span style="left:69.0px;top:241.0px;font-size:12px;line-height:13.80px;color:#1E1E1E;font-family:'Liberation Sans', sans-serif;transform:scaleX(0.9550);transform-origin:0 0;">Lab1_Part0.cpp</span>
<svg style="left:51.0px;top:259.0px" width="10" height="12" viewBox="0 0 10 12"><path d="M1,1 H6.5 L9,3.5 V11 H1 Z" fill="#FFFFFF" stroke="#424242" stroke-width="2"/><path d="M3.5,4 H5.5 M2.5,6.5 H7.5 M2.5,8.5 H7.5" stroke="#424242" stroke-width="1"/></svg>
<span style="left:69.0px;top:259.0px;font-size:12px;line-height:13.80px;color:#1E1E1E;font-family:'Liberation Sans', sans-serif;transform:scaleX(0.9550);transform-origin:0 0;">ReadMe.txt</span>
<svg style="left:50.0px;top:279.0px" width="12" height="8" viewBox="0 0 12 8"><g fill="#9B3F98"><rect x="0" y="2" width="6" height="2"/><rect x="2" y="0" width="2" height="6"/><rect x="6" y="4" width="6" height="2"/><rect x="8" y="2" width="2" height="6"/></g></svg>
<span style="left:69.0px;top:277.0px;font-size:12px;line-height:13.80px;color:#1E1E1E;font-family:'Liberation Sans', sans-serif;transform:scaleX(0.9550);transform-origin:0 0;">stdafx.cpp</span>
<svg style="left:52.0px;top:296.0px" width="8" height="9" viewBox="0 0 8 9"><path d="M0.6,0.6 H5.4 L7.4,2.6 V8.4 H0.6 Z" fill="#FFFFFF" stroke="#424242" stroke-width="1.2"/><path d="M2.6,1.8 V7 M2.6,4.2 H5.4 V7" stroke="#9B3F98" stroke-width="1.3" fill="none"/></svg>
<span style="left:69.0px;top:295.0px;font-size:12px;line-height:13.80px;color:#1E1E1E;font-family:'Liberation Sans', sans-serif;transform:scaleX(0.9550);transform-origin:0 0;">stdafx.h</span>
<svg style="left:52.0px;top:314.0px" width="8" height="9" viewBox="0 0 8 9"><path d="M0.6,0.6 H5.4 L7.4,2.6 V8.4 H0.6 Z" fill="#FFFFFF" stroke="#424242" stroke-width="1.2"/><path d="M2.6,1.8 V7 M2.6,4.2 H5.4 V7" stroke="#9B3F98" stroke-width="1.3" fill="none"/></svg>
<span style="left:69.0px;top:313.0px;font-size:12px;line-height:13.80px;color:#1E1E1E;font-family:'Liberation Sans', sans-serif;transform:scaleX(0.9550);transform-origin:0 0;">targetver.h</span>
<svg style="left:11.0px;top:333.5px" width="8" height="7" viewBox="0 0 8 7"><path d="M0,6.5 H6.5 V0 Z" fill="#1E1E1E"/></svg>
<svg style="left:31.0px;top:331.0px" width="14" height="12" viewBox="0 0 14 12"><rect x="0.5" y="0.5" width="13" height="11" fill="#F5EFF8" stroke="#9B4F96" stroke-width="1.1"/><path d="M2,4 H8 M5,1 V7 M6,8 H12 M9,5 V11" stroke="#424242" stroke-width="1.8"/></svg>
<span style="left:51.0px;top:331.0px;font-size:12px;line-height:13.80px;color:#1E1E1E;font-family:'Liberation Sans', sans-serif;transform:scaleX(0.9550);transform-origin:0 0;">Lab1_Part1</span>
<svg style="left:28.5px;top:350.0px" width="7" height="10" viewBox="0 0 7 10"><path d="M1.5,0.8 L5.8,4.7 L1.5,8.7 Z" fill="none" stroke="#1E1E1E" stroke-width="1.1"/></svg>
<svg style="left:49.0px;top:348.0px" width="14" height="14" viewBox="0 0 14 14"><path d="M0,2 H7 L8,0 H14 V6 H0 Z" fill="#424242"/><path d="M1,3 H7.5 L8.5,1 H13 V5 H1 Z" fill="#F5EFF8"/><rect x="10" y="1.8" width="2" height="1.2" fill="#424242"/><rect x="0" y="6" width="6" height="3" fill="#424242"/><path d="M0.5,11.5 H5.5 M3,11.5 V14" stroke="#424242" stroke-width="1.2"/><rect x="7.65" y="7.65" width="5.7" height="5.7" fill="#FFFFFF" stroke="#1BA1E2" stroke-width="1.3"/><path d="M9.3,11.7 L11.8,9.2 M9.8,9.2 H11.8 V11.2" stroke="#1BA1E2" stroke-width="1.1" fill="none"/></svg>
<span style="left:69.0px;top:349.0px;font-size:12px;line-height:13.80px;color:#1E1E1E;font-family:'Liberation Sans', sans-serif;transform:scaleX(0.9550);transform-origin:0 0;">External Dependencies</span>
<svg style="left:28.5px;top:368.0px" width="7" height="10" viewBox="0 0 7 10"><path d="M1.5,0.8 L5.8,4.7 L1.5,8.7 Z" fill="none" stroke="#1E1E1E" stroke-width="1.1"/></svg>
<svg style="left:50.0px;top:369.0px" width="12" height="8" viewBox="0 0 12 8"><g fill="#9B3F98"><rect x="0" y="2" width="6" height="2"/><rect x="2" y="0" width="2" height="6"/><rect x="6" y="4" width="6" height="2"/><rect x="8" y="2" width="2" height="6"/></g></svg>
<span style="left:69.0px;top:367.0px;font-size:12px;line-height:13.80px;color:#1E1E1E;font-family:'Liberation Sans', sans-serif;transform:scaleX(0.9550);transform-origin:0 0;">Lab1_Part1.cpp</span>
<svg style="left:51.0px;top:385.0px" width="10" height="12" viewBox="0 0 10 12"><path d="M1,1 H6.5 L9,3.5 V11 H1 Z" fill="#FFFFFF" stroke="#424242" stroke-width="2"/><path d="M3.5,4 H5.5 M2.5,6.5 H7.5 M2.5,8.5 H7.5" stroke="#424242" stroke-width="1"/></svg>
<span style="left:69.0px;top:385.0px;font-size:12px;line-height:13.80px;color:#1E1E1E;font-family:'Liberation Sans', sans-serif;transform:scaleX(0.9550);transform-origin:0 0;">ReadMe.txt</span>
<svg style="left:50.0px;top:405.0px" width="12" height="8" viewBox="0 0 12 8"><g fill="#9B3F98"><rect x="0" y="2" width="6" height="2"/><rect x="2" y="0" width="2" height="6"/><rect x="6" y="4" width="6" height="2"/><rect x="8" y="2" width="2" height="6"/></g></svg>
<span style="left:69.0px;top:403.0px;font-size:12px;line-height:13.80px;color:#1E1E1E;font-family:'Liberation Sans', sans-serif;transform:scaleX(0.9550);transform-origin:0 0;">stdafx.cpp</span>
<svg style="left:52.0px;top:422.0px" width="8" height="9" viewBox="0 0 8 9"><path d="M0.6,0.6 H5.4 L7.4,2.6 V8.4 H0.6 Z" fill="#FFFFFF" stroke="#424242" stroke-width="1.2"/><path d="M2.6,1.8 V7 M2.6,4.2 H5.4 V7" stroke="#9B3F98" stroke-width="1.3" fill="none"/></svg>
<span style="left:69.0px;top:421.0px;font-size:12px;line-height:13.80px;color:#1E1E1E;font-family:'Liberation Sans', sans-serif;transform:scaleX(0.9550);transform-origin:0 0;">stdafx.h</span>
<svg style="left:52.0px;top:440.0px" width="8" height="9" viewBox="0 0 8 9"><path d="M0.6,0.6 H5.4 L7.4,2.6 V8.4 H0.6 Z" fill="#FFFFFF" stroke="#424242" stroke-width="1.2"/><path d="M2.6,1.8 V7 M2.6,4.2 H5.4 V7" stroke="#9B3F98" stroke-width="1.3" fill="none"/></svg>
<span style="left:69.0px;top:439.0px;font-size:12px;line-height:13.80px;color:#1E1E1E;font-family:'Liberation Sans', sans-serif;transform:scaleX(0.9550);transform-origin:0 0;">targetver.h</span>
<svg style="left:11.0px;top:459.5px" width="8" height="7" viewBox="0 0 8 7"><path d="M0,6.5 H6.5 V0 Z" fill="#1E1E1E"/></svg>
<svg style="left:31.0px;top:457.0px" width="14" height="12" viewBox="0 0 14 12"><rect x="0.5" y="0.5" width="13" height="11" fill="#F5EFF8" stroke="#9B4F96" stroke-width="1.1"/><path d="M2,4 H8 M5,1 V7 M6,8 H12 M9,5 V11" stroke="#424242" stroke-width="1.8"/></svg>
<span style="left:51.0px;top:457.0px;font-size:12px;line-height:13.80px;color:#1E1E1E;font-family:'Liberation Sans', sans-serif;transform:scaleX(0.9550);transform-origin:0 0;">Lab1_Part2</span>
<svg style="left:28.5px;top:476.0px" width="7" height="10" viewBox="0 0 7 10"><path d="M1.5,0.8 L5.8,4.7 L1.5,8.7 Z" fill="none" stroke="#1E1E1E" stroke-width="1.1"/></svg>
<svg style="left:49.0px;top:474.0px" width="14" height="14" viewBox="0 0 14 14"><path d="M0,2 H7 L8,0 H14 V6 H0 Z" fill="#424242"/><path d="M1,3 H7.5 L8.5,1 H13 V5 H1 Z" fill="#F5EFF8"/><rect x="10" y="1.8" width="2" height="1.2" fill="#424242"/><rect x="0" y="6" width="6" height="3" fill="#424242"/><path d="M0.5,11.5 H5.5 M3,11.5 V14" stroke="#424242" stroke-width="1.2"/><rect x="7.65" y="7.65" width="5.7" height="5.7" fill="#FFFFFF" stroke="#1BA1E2" stroke-width="1.3"/><path d="M9.3,11.7 L11.8,9.2 M9.8,9.2 H11.8 V11.2" stroke="#1BA1E2" stroke-width="1.1" fill="none"/></svg>
<span style="left:69.0px;top:475.0px;font-size:12px;line-height:13.80px;color:#1E1E1E;font-family:'Liberation Sans', sans-serif;transform:scaleX(0.9550);transform-origin:0 0;">External Dependencies</span>
<svg style="left:29.0px;top:495.5px" width="8" height="7" viewBox="0 0 8 7"><path d="M0,6.5 H6.5 V0 Z" fill="#1E1E1E"/></svg>
<svg style="left:49.0px;top:492.0px" width="14" height="14" viewBox="0 0 14 14"><path d="M2,2 H7.5 L9,0 H14 V13 H2 Z" fill="#424242"/><path d="M3,3 H8 L9.5,1 H13 V12 H3 Z" fill="#F5EFF8"/><rect x="10" y="2" width="2" height="1" fill="#424242"/><path d="M0,6 H10 L12,12.5 H3 V8.5 H0 Z" fill="#424242"/><path d="M0.3,10.8 H5 M2.6,10.8 V14" stroke="#424242" stroke-width="1.3"/></svg>
<span style="left:69.0px;top:493.0px;font-size:12px;line-height:13.80px;color:#1E1E1E;font-family:'Liberation Sans', sans-serif;transform:scaleX(0.9550);transform-origin:0 0;">Header Files</span>
<svg style="left:46.5px;top:512.0px" width="7" height="10" viewBox="0 0 7 10"><path d="M1.5,0.8 L5.8,4.7 L1.5,8.7 Z" fill="none" stroke="#1E1E1E" stroke-width="1.1"/></svg>
<svg style="left:70.0px;top:512.0px" width="8" height="9" viewBox="0 0 8 9"><path d="M0.6,0.6 H5.4 L7.4,2.6 V8.4 H0.6 Z" fill="#FFFFFF" stroke="#424242" stroke-width="1.2"/><path d="M2.6,1.8 V7 M2.6,4.2 H5.4 V7" stroke="#9B3F98" stroke-width="1.3" fill="none"/></svg>
<span style="left:87.0px;top:511.0px;font-size:12px;line-height:13.80px;color:#1E1E1E;font-family:'Liberation Sans', sans-serif;transform:scaleX(0.9550);transform-origin:0 0;">CStopWatch.h</span>
<svg style="left:70.0px;top:530.0px" width="8" height="9" viewBox="0 0 8 9"><path d="M0.6,0.6 H5.4 L7.4,2.6 V8.4 H0.6 Z" fill="#FFFFFF" stroke="#424242" stroke-width="1.2"/><path d="M2.6,1.8 V7 M2.6,4.2 H5.4 V7" stroke="#9B3F98" stroke-width="1.3" fill="none"/></svg>
<span style="left:87.0px;top:529.0px;font-size:12px;line-height:13.80px;color:#1E1E1E;font-family:'Liberation Sans', sans-serif;transform:scaleX(0.9550);transform-origin:0 0;">stdafx.h</span>
<svg style="left:70.0px;top:548.0px" width="8" height="9" viewBox="0 0 8 9"><path d="M0.6,0.6 H5.4 L7.4,2.6 V8.4 H0.6 Z" fill="#FFFFFF" stroke="#424242" stroke-width="1.2"/><path d="M2.6,1.8 V7 M2.6,4.2 H5.4 V7" stroke="#9B3F98" stroke-width="1.3" fill="none"/></svg>
<span style="left:87.0px;top:547.0px;font-size:12px;line-height:13.80px;color:#1E1E1E;font-family:'Liberation Sans', sans-serif;transform:scaleX(0.9550);transform-origin:0 0;">targetver.h</span>
</div>
<div style="left:349px;top:147px;width:1px;height:613px;background:#DCDCE4;"></div>
<div style="left:350px;top:147px;width:2px;height:613px;background:#F3F3F8;"></div>
<div style="left:5px;top:740px;width:98px;height:20px;background:#F6F6F6;"></div>
<span style="left:10.4px;top:744px;font-size:12px;line-height:13.80px;color:#0E70C0;font-family:'Liberation Sans', sans-serif;transform:scaleX(0.9674);transform-origin:0 0;">Solution Explorer</span>
<div style="left:103px;top:740px;width:1px;height:20px;background:#CCCEDB;"></div>
<span style="left:109.5px;top:744px;font-size:12px;line-height:13.80px;color:#1E1E1E;font-family:'Liberation Sans', sans-serif;transform:scaleX(0.9216);transform-origin:0 0;">Class View</span>
<div style="left:353px;top:111px;width:127px;height:19px;background:#007ACC;"></div>
<span style="left:357.6px;top:116px;font-size:12px;line-height:13.80px;color:#FFFFFF;font-family:'Liberation Sans', sans-serif;transform:scaleX(0.9359);transform-origin:0 0;">Lab1_Part0.cpp</span>
<svg style="left:447px;top:117px" width="9" height="11" viewBox="0 0 9 11"><path d="M2,0.5 H7 V6 H8.5 V7 H5 V11 H4 V7 H0.5 V6 H2 Z M3,1.5 V6 H6 V1.5 Z" fill="#FFFFFF" fill-rule="evenodd"/><rect x="5" y="1" width="1" height="5" fill="#FFFFFF"/></svg>
<svg style="left:465px;top:116.5px" width="11" height="11" viewBox="0 0 11 11"><path d="M1,1 L10,10 M10,1 L1,10" stroke="#FFFFFF" stroke-width="1.6"/></svg>
<span style="left:484.5px;top:116px;font-size:12px;line-height:13.80px;color:#1E1E1E;font-family:'Liberation Sans', sans-serif;transform:scaleX(0.9394);transform-origin:0 0;">Lab1_Part1.cpp</span>
<span style="left:610.7px;top:116px;font-size:12px;line-height:13.80px;color:#1E1E1E;font-family:'Liberation Sans', sans-serif;transform:scaleX(0.9441);transform-origin:0 0;">Lab1_Part2.cpp</span>
<span style="left:738.8px;top:116px;font-size:12px;line-height:13.80px;color:#1E1E1E;font-family:'Liberation Sans', sans-serif;transform:scaleX(0.9886);transform-origin:0 0;">Assignment1.cpp</span>
<svg style="left:1128.0px;top:120px" width="8" height="4" viewBox="0 0 8 4"><path d="M0,0 L8,0 L4.0,4 Z" fill="#717171"/></svg>
<div style="left:353px;top:130px;width:786px;height:2px;background:#007ACC;"></div>
<div style="left:353px;top:132px;width:786px;height:20px;background:#FFFFFF;"></div>
<div style="left:353px;top:152px;width:786px;height:2px;background:#CCCEDB;"></div>
<span style="left:374.5px;top:137px;font-size:12px;line-height:13.80px;color:#1E1E1E;font-family:'Liberation Sans', sans-serif;transform:scaleX(0.9483);transform-origin:0 0;">(Global Scope)</span>
<svg style="left:736.2px;top:142px" width="6" height="3" viewBox="0 0 6 3"><path d="M0,0 L6,0 L3.0,3 Z" fill="#717171"/></svg>
<div style="left:744px;top:132px;width:2px;height:20px;background:#CCCEDB;"></div>
<svg style="left:750px;top:136px" width="10" height="11" viewBox="0 0 10 11"><path d="M5,0.8 L9.2,3 V8 L5,10.2 L0.8,8 V3 Z M0.8,3 L5,5.3 L9.2,3 M5,5.3 V10.2" fill="none" stroke="#68217A" stroke-width="1.1"/></svg>
<span style="left:767.5px;top:137px;font-size:12px;line-height:13.80px;color:#1E1E1E;font-family:'Liberation Sans', sans-serif;transform:scaleX(1.0054);transform-origin:0 0;">main(int argc, char * argv[])</span>
<svg style="left:1130.5px;top:142px" width="5" height="3" viewBox="0 0 5 3"><path d="M0,0 L5,0 L2.5,3 Z" fill="#717171"/></svg>
<div style="left:353px;top:154px;width:17px;height:435px;background:#E6E7ED;"></div>
<div style="left:370px;top:154px;width:752px;height:435px;background:#FFFFFF;"></div>
<div style="left:1122px;top:154px;width:17px;height:435px;background:#EEEEEE;"></div>
<div style="left:1122px;top:154px;width:17px;height:17px;background:#E8EBEF;"></div>
<svg style="left:1124px;top:155px" width="13" height="15" viewBox="0 0 13 15"><path d="M6.5,1 V14 M1,6 H12 M1,8.5 H12" stroke="#1E1E1E" stroke-width="1.3"/><path d="M4,3.5 L6.5,0.8 L9,3.5 M4,11.5 L6.5,14.2 L9,11.5" fill="#1E1E1E" stroke="#1E1E1E" stroke-width="0.8"/></svg>
<svg style="left:1125px;top:176px" width="11" height="7" viewBox="0 0 11 7"><path d="M0.5,6 L5,0.5 L9.5,6 Z" fill="#868999"/></svg>
<div style="left:1126px;top:290px;width:9px;height:140px;background:#D5D5D5;"></div>
<svg style="left:1125px;top:577px" width="11" height="6" viewBox="0 0 11 6"><path d="M0.5,0.5 H9.5 L5,5.5 Z" fill="#868999"/></svg>
<div style="left:353px;top:589px;width:786px;height:17px;background:#EEEEEE;"></div>
<div style="left:354px;top:590px;width:58px;height:15px;background:#FFFFFF;"></div>
<span style="left:356.8px;top:592px;font-size:12px;line-height:13.80px;color:#1E1E1E;font-family:'Liberation Sans', sans-serif;transform:scaleX(0.9052);transform-origin:0 0;">100 %</span>
<svg style="left:404.5px;top:598px" width="5" height="3" viewBox="0 0 5 3"><path d="M0,0 L5,0 L2.5,3 Z" fill="#717171"/></svg>
<svg style="left:418px;top:593px" width="7" height="10" viewBox="0 0 7 10"><path d="M6,0.5 V9 L0.5,4.75 Z" fill="#868999"/></svg>
<div style="left:430px;top:593px;width:566px;height:9px;background:#D5D5D5;"></div>
<svg style="left:1110px;top:593px" width="7" height="10" viewBox="0 0 7 10"><path d="M0.5,0.5 V9 L6,4.75 Z" fill="#868999"/></svg>
<div style="left:353px;top:606px;width:786px;height:6px;background:#CCCEDB;"></div>
<div style="left:424px;top:442px;width:697px;height:15px;border:2px solid #EAEAF2;box-sizing:border-box"></div>
<span style="left:384px;top:155px;width:21px;text-align:right;font:11.667px/16px 'Liberation Mono',monospace;color:#2B91AF">21</span>
<span style="left:426.5px;top:155px;font:11.667px/16px 'Liberation Mono',monospace;color:#000;-webkit-text-stroke:0.1px"><b style="color:#0000FF;font-weight:normal">int</b><b style="color:#000000;font-weight:normal"> main(</b><b style="color:#0000FF;font-weight:normal">int</b><b style="color:#000000;font-weight:normal"> </b><b style="color:#808080;font-weight:normal">argc</b><b style="color:#000000;font-weight:normal">, </b><b style="color:#0000FF;font-weight:normal">char</b><b style="color:#000000;font-weight:normal">* </b><b style="color:#808080;font-weight:normal">argv</b><b style="color:#000000;font-weight:normal">[])</b></span>
<span style="left:384px;top:171px;width:21px;text-align:right;font:11.667px/16px 'Liberation Mono',monospace;color:#2B91AF">22</span>
<span style="left:426.5px;top:171px;font:11.667px/16px 'Liberation Mono',monospace;color:#000;-webkit-text-stroke:0.1px"><b style="color:#000000;font-weight:normal">{</b></span>
<div style="left:407px;top:170px;width:5px;height:16px;background:#6CE26C;"></div>
<span style="left:384px;top:187px;width:21px;text-align:right;font:11.667px/16px 'Liberation Mono',monospace;color:#2B91AF">23</span>
<span style="left:426.5px;top:187px;font:11.667px/16px 'Liberation Mono',monospace;color:#000;-webkit-text-stroke:0.1px"><b style="color:#008000;font-weight:normal">    //cout is the command to print things to the command line in C++</b></span>
<div style="left:407px;top:186px;width:5px;height:16px;background:#6CE26C;"></div>
<span style="left:384px;top:203px;width:21px;text-align:right;font:11.667px/16px 'Liberation Mono',monospace;color:#2B91AF">24</span>
<span style="left:426.5px;top:203px;font:11.667px/16px 'Liberation Mono',monospace;color:#000;-webkit-text-stroke:0.1px"><b style="color:#008000;font-weight:normal">    //endl inserts an end of line character / line break</b></span>
<div style="left:407px;top:202px;width:5px;height:16px;background:#6CE26C;"></div>
<span style="left:384px;top:219px;width:21px;text-align:right;font:11.667px/16px 'Liberation Mono',monospace;color:#2B91AF">25</span>
<span style="left:426.5px;top:219px;font:11.667px/16px 'Liberation Mono',monospace;color:#000;-webkit-text-stroke:0.1px"><b style="color:#000000;font-weight:normal">    cout&lt;&lt;</b><b style="color:#A31515;font-weight:normal">&quot;Hello CS585!&quot;</b><b style="color:#000000;font-weight:normal">&lt;&lt;endl;</b></span>
<div style="left:407px;top:218px;width:5px;height:16px;background:#6CE26C;"></div>
<span style="left:384px;top:235px;width:21px;text-align:right;font:11.667px/16px 'Liberation Mono',monospace;color:#2B91AF">26</span>
<div style="left:407px;top:234px;width:5px;height:16px;background:#6CE26C;"></div>
<span style="left:384px;top:251px;width:21px;text-align:right;font:11.667px/16px 'Liberation Mono',monospace;color:#2B91AF">27</span>
<span style="left:426.5px;top:251px;font:11.667px/16px 'Liberation Mono',monospace;color:#000;-webkit-text-stroke:0.1px"><b style="color:#008000;font-weight:normal">    //Mat is the OpenCV container for images and matrices</b></span>
<div style="left:407px;top:250px;width:5px;height:16px;background:#6CE26C;"></div>
<span style="left:384px;top:267px;width:21px;text-align:right;font:11.667px/16px 'Liberation Mono',monospace;color:#2B91AF">28</span>
<span style="left:426.5px;top:267px;font:11.667px/16px 'Liberation Mono',monospace;color:#000;-webkit-text-stroke:0.1px"><b style="color:#000000;font-weight:normal">    </b><b style="color:#2B91AF;font-weight:normal">Mat</b><b style="color:#000000;font-weight:normal"> image;</b></span>
<div style="left:407px;top:266px;width:5px;height:16px;background:#6CE26C;"></div>
<span style="left:384px;top:283px;width:21px;text-align:right;font:11.667px/16px 'Liberation Mono',monospace;color:#2B91AF">29</span>
<div style="left:407px;top:282px;width:5px;height:16px;background:#6CE26C;"></div>
<span style="left:384px;top:299px;width:21px;text-align:right;font:11.667px/16px 'Liberation Mono',monospace;color:#2B91AF">30</span>
<span style="left:426.5px;top:299px;font:11.667px/16px 'Liberation Mono',monospace;color:#000;-webkit-text-stroke:0.1px"><b style="color:#008000;font-weight:normal">    //imread is the OpenCV function for reading images from a file</b></span>
<div style="left:407px;top:298px;width:5px;height:16px;background:#6CE26C;"></div>
<span style="left:384px;top:315px;width:21px;text-align:right;font:11.667px/16px 'Liberation Mono',monospace;color:#2B91AF">31</span>
<span style="left:426.5px;top:315px;font:11.667px/16px 'Liberation Mono',monospace;color:#000;-webkit-text-stroke:0.1px"><b style="color:#000000;font-weight:normal">    image = imread(</b><b style="color:#A31515;font-weight:normal">&quot;HelloCS585.jpg&quot;</b><b style="color:#000000;font-weight:normal">);</b></span>
<div style="left:407px;top:314px;width:5px;height:16px;background:#6CE26C;"></div>
<span style="left:384px;top:331px;width:21px;text-align:right;font:11.667px/16px 'Liberation Mono',monospace;color:#2B91AF">32</span>
<div style="left:407px;top:330px;width:5px;height:16px;background:#6CE26C;"></div>
<span style="left:384px;top:347px;width:21px;text-align:right;font:11.667px/16px 'Liberation Mono',monospace;color:#2B91AF">33</span>
<span style="left:426.5px;top:347px;font:11.667px/16px 'Liberation Mono',monospace;color:#000;-webkit-text-stroke:0.1px"><b style="color:#008000;font-weight:normal">    //namedWindow is the OpenCV function for creating a new window</b></span>
<div style="left:407px;top:346px;width:5px;height:16px;background:#6CE26C;"></div>
<span style="left:384px;top:363px;width:21px;text-align:right;font:11.667px/16px 'Liberation Mono',monospace;color:#2B91AF">34</span>
<span style="left:426.5px;top:363px;font:11.667px/16px 'Liberation Mono',monospace;color:#000;-webkit-text-stroke:0.1px"><b style="color:#000000;font-weight:normal">    namedWindow( </b><b style="color:#A31515;font-weight:normal">&quot;Image View&quot;</b><b style="color:#000000;font-weight:normal">, 1 );</b></span>
<div style="left:407px;top:362px;width:5px;height:16px;background:#6CE26C;"></div>
<span style="left:384px;top:379px;width:21px;text-align:right;font:11.667px/16px 'Liberation Mono',monospace;color:#2B91AF">35</span>
<div style="left:407px;top:378px;width:5px;height:16px;background:#6CE26C;"></div>
<span style="left:384px;top:395px;width:21px;text-align:right;font:11.667px/16px 'Liberation Mono',monospace;color:#2B91AF">36</span>
<span style="left:426.5px;top:395px;font:11.667px/16px 'Liberation Mono',monospace;color:#000;-webkit-text-stroke:0.1px"><b style="color:#008000;font-weight:normal">    //imshow is the OpenCV command for display an image in a window.</b></span>
<div style="left:407px;top:394px;width:5px;height:16px;background:#6CE26C;"></div>
<span style="left:384px;top:411px;width:21px;text-align:right;font:11.667px/16px 'Liberation Mono',monospace;color:#2B91AF">37</span>
<span style="left:426.5px;top:411px;font:11.667px/16px 'Liberation Mono',monospace;color:#000;-webkit-text-stroke:0.1px"><b style="color:#008000;font-weight:normal">    //The arguments are the name of the window, used with the namedWindow() function,</b></span>
<div style="left:407px;top:410px;width:5px;height:16px;background:#6CE26C;"></div>
<span style="left:384px;top:427px;width:21px;text-align:right;font:11.667px/16px 'Liberation Mono',monospace;color:#2B91AF">38</span>
<span style="left:426.5px;top:427px;font:11.667px/16px 'Liberation Mono',monospace;color:#000;-webkit-text-stroke:0.1px"><b style="color:#008000;font-weight:normal">    //and the image data, in a Mat structure</b></span>
<div style="left:407px;top:426px;width:5px;height:16px;background:#6CE26C;"></div>
<span style="left:384px;top:443px;width:21px;text-align:right;font:11.667px/16px 'Liberation Mono',monospace;color:#2B91AF">39</span>
<span style="left:426.5px;top:443px;font:11.667px/16px 'Liberation Mono',monospace;color:#000;-webkit-text-stroke:0.1px"><b style="color:#000000;font-weight:normal">    imshow(</b><b style="color:#A31515;font-weight:normal">&quot;Image View&quot;</b><b style="color:#000000;font-weight:normal">, image);</b></span>
<span style="left:384px;top:459px;width:21px;text-align:right;font:11.667px/16px 'Liberation Mono',monospace;color:#2B91AF">40</span>
<span style="left:426.5px;top:459px;font:11.667px/16px 'Liberation Mono',monospace;color:#000;-webkit-text-stroke:0.1px"><b style="color:#000000;font-weight:normal">    </b><b style="color:#0000FF;font-weight:normal">char</b><b style="color:#000000;font-weight:normal"> key = waitKey(0);</b></span>
<div style="left:407px;top:458px;width:5px;height:16px;background:#6CE26C;"></div>
<span style="left:384px;top:475px;width:21px;text-align:right;font:11.667px/16px 'Liberation Mono',monospace;color:#2B91AF">41</span>
<div style="left:407px;top:474px;width:5px;height:16px;background:#6CE26C;"></div>
<span style="left:384px;top:491px;width:21px;text-align:right;font:11.667px/16px 'Liberation Mono',monospace;color:#2B91AF">42</span>
<span style="left:426.5px;top:491px;font:11.667px/16px 'Liberation Mono',monospace;color:#000;-webkit-text-stroke:0.1px"><b style="color:#008000;font-weight:normal">    //Using cout, different types of output can be chained together using the &lt;&lt; operator</b></span>
<div style="left:407px;top:490px;width:5px;height:16px;background:#6CE26C;"></div>
<span style="left:384px;top:507px;width:21px;text-align:right;font:11.667px/16px 'Liberation Mono',monospace;color:#2B91AF">43</span>
<span style="left:426.5px;top:507px;font:11.667px/16px 'Liberation Mono',monospace;color:#000;-webkit-text-stroke:0.1px"><b style="color:#000000;font-weight:normal">    cout&lt;&lt;</b><b style="color:#A31515;font-weight:normal">&quot;You pressed &quot;</b><b style="color:#000000;font-weight:normal">&lt;&lt;key&lt;&lt;</b><b style="color:#A31515;font-weight:normal">&quot;.&quot;</b><b style="color:#000000;font-weight:normal">&lt;&lt;endl;</b></span>
<div style="left:407px;top:506px;width:5px;height:16px;background:#6CE26C;"></div>
<span style="left:384px;top:523px;width:21px;text-align:right;font:11.667px/16px 'Liberation Mono',monospace;color:#2B91AF">44</span>
<div style="left:407px;top:522px;width:5px;height:16px;background:#6CE26C;"></div>
<span style="left:384px;top:539px;width:21px;text-align:right;font:11.667px/16px 'Liberation Mono',monospace;color:#2B91AF">45</span>
<span style="left:426.5px;top:539px;font:11.667px/16px 'Liberation Mono',monospace;color:#000;-webkit-text-stroke:0.1px"><b style="color:#008000;font-weight:normal">    //in C++, main returns an integer, which is usually 0 by convention</b></span>
<div style="left:407px;top:538px;width:5px;height:16px;background:#6CE26C;"></div>
<span style="left:384px;top:555px;width:21px;text-align:right;font:11.667px/16px 'Liberation Mono',monospace;color:#2B91AF">46</span>
<span style="left:426.5px;top:555px;font:11.667px/16px 'Liberation Mono',monospace;color:#000;-webkit-text-stroke:0.1px"><b style="color:#000000;font-weight:normal">    </b><b style="color:#0000FF;font-weight:normal">return</b><b style="color:#000000;font-weight:normal"> 0;</b></span>
<div style="left:407px;top:554px;width:5px;height:16px;background:#6CE26C;"></div>
<span style="left:384px;top:571px;width:21px;text-align:right;font:11.667px/16px 'Liberation Mono',monospace;color:#2B91AF">47</span>
<span style="left:426.5px;top:571px;font:11.667px/16px 'Liberation Mono',monospace;color:#000;-webkit-text-stroke:0.1px"><b style="color:#000000;font-weight:normal">}</b></span>
<svg style="left:415px;top:158px" width="9" height="9" viewBox="0 0 9 9"><rect x="0.5" y="0.5" width="8" height="8" fill="#FFFFFF" stroke="#A5A5A5" stroke-width="1"/><path d="M2,4.5 H7" stroke="#1E1E1E" stroke-width="1"/></svg>
<svg style="left:415px;top:190px" width="9" height="9" viewBox="0 0 9 9"><rect x="0.5" y="0.5" width="8" height="8" fill="#FFFFFF" stroke="#A5A5A5" stroke-width="1"/><path d="M2,4.5 H7" stroke="#1E1E1E" stroke-width="1"/></svg>
<svg style="left:415px;top:398px" width="9" height="9" viewBox="0 0 9 9"><rect x="0.5" y="0.5" width="8" height="8" fill="#FFFFFF" stroke="#A5A5A5" stroke-width="1"/><path d="M2,4.5 H7" stroke="#1E1E1E" stroke-width="1"/></svg>
<div style="left:420px;top:167px;width:1px;height:23px;background:#A5A5A5;"></div>
<div style="left:420px;top:199px;width:1px;height:199px;background:#A5A5A5;"></div>
<div style="left:420px;top:407px;width:1px;height:179px;background:#A5A5A5;"></div>
<div style="left:420px;top:217px;width:4px;height:1px;background:#A5A5A5;"></div>
<div style="left:420px;top:441px;width:4px;height:1px;background:#A5A5A5;"></div>
<div style="left:420px;top:585px;width:4px;height:1px;background:#A5A5A5;"></div>
<svg style="left:355px;top:443px" width="13" height="13" viewBox="0 0 13 13"><circle cx="6.5" cy="6.4" r="5.6" fill="#F00000"/><path d="M2.2,4 H6.6 V1.9 L11.9,6.4 L6.6,10.9 V8.8 H2.2 Z" fill="#FFE13C" stroke="#30373D" stroke-width="0.9" stroke-linejoin="miter"/></svg>
<span style="left:357.3px;top:617px;font-size:12px;line-height:13.80px;color:#1E1E1E;font-family:'Liberation Sans', sans-serif;transform:scaleX(0.9640);transform-origin:0 0;">Watch 1</span>
<div style="left:407px;top:620px;width:279px;height:5px;background-image:radial-gradient(circle at 0.5px 0.5px,#A8A8B0 0.6px,transparent 0.8px);background-size:4px 4px"></div>
<div style="left:409px;top:622px;width:277px;height:3px;background-image:radial-gradient(circle at 0.5px 0.5px,#A8A8B0 0.6px,transparent 0.8px);background-size:4px 4px"></div>
<svg style="left:692px;top:620px" width="9" height="5" viewBox="0 0 9 5"><path d="M0,0 H8 L4,4 Z" fill="#1E1E1E"/></svg>
<svg style="left:709px;top:617px" width="9" height="11" viewBox="0 0 9 11"><path d="M2,0.5 H7 V6 H8.5 V7 H5 V11 H4 V7 H0.5 V6 H2 Z M3,1.5 V6 H6 V1.5 Z" fill="#1E1E1E" fill-rule="evenodd"/><rect x="5" y="1" width="1" height="5" fill="#1E1E1E"/></svg>
<svg style="left:724px;top:618px" width="10" height="10" viewBox="0 0 10 10"><path d="M1,1 L9,9 M9,1 L1,9" stroke="#1E1E1E" stroke-width="1.6"/></svg>
<div style="left:353px;top:633px;width:370px;height:107px;background:#F6F6F6;"></div>
<div style="left:353px;top:633px;width:1px;height:19px;background:#CCCEDB;"></div>
<div style="left:354px;top:651px;width:369px;height:1px;background:#CCCEDB;"></div>
<div style="left:361px;top:633px;width:1px;height:18px;background:#CCCEDB;"></div>
<div style="left:465px;top:633px;width:1px;height:18px;background:#CCCEDB;"></div>
<div style="left:673px;top:633px;width:1px;height:18px;background:#CCCEDB;"></div>
<span style="left:367.4px;top:637px;font-size:12px;line-height:13.80px;color:#1E1E1E;font-family:'Liberation Sans', sans-serif;transform:scaleX(0.9060);transform-origin:0 0;">Name</span>
<span style="left:471.2px;top:637px;font-size:12px;line-height:13.80px;color:#1E1E1E;font-family:'Liberation Sans', sans-serif;transform:scaleX(0.9563);transform-origin:0 0;">Value</span>
<span style="left:679.7px;top:637px;font-size:12px;line-height:13.80px;color:#1E1E1E;font-family:'Liberation Sans', sans-serif;transform:scaleX(0.9225);transform-origin:0 0;">Type</span>
<div style="left:723px;top:633px;width:17px;height:107px;background:#EEEEEF;"></div>
<svg style="left:726px;top:638px" width="11" height="7" viewBox="0 0 11 7"><path d="M0.5,6 L5,0.5 L9.5,6 Z" fill="#D0D0D8"/></svg>
<svg style="left:726px;top:729px" width="11" height="6" viewBox="0 0 11 6"><path d="M0.5,0.5 H9.5 L5,5.5 Z" fill="#D0D0D8"/></svg>
<svg style="left:365px;top:658px" width="9" height="9" viewBox="0 0 9 9"><rect x="0.5" y="0.5" width="8" height="8" fill="#FFF" stroke="#8C8C8C"/><path d="M2,4.5 H7 M4.5,2 V7" stroke="#1E1E1E"/></svg>
<svg style="left:381px;top:657px" width="11" height="10" viewBox="0 0 11 10"><path d="M0.5,3 L5.5,0.5 L10.5,2.5 V7.5 L5.5,9.5 L0.5,7.5 Z" fill="#1C5BA8"/><path d="M0.5,3 L5.5,5 L10.5,2.5" stroke="#9CC2EE" stroke-width="0.8" fill="none"/></svg>
<svg style="left:381px;top:673.5px" width="11" height="10" viewBox="0 0 11 10"><path d="M0.5,3 L5.5,0.5 L10.5,2.5 V7.5 L5.5,9.5 L0.5,7.5 Z" fill="#1C5BA8"/><path d="M0.5,3 L5.5,5 L10.5,2.5" stroke="#9CC2EE" stroke-width="0.8" fill="none"/></svg>
<span style="left:400.2px;top:656px;font-size:12px;line-height:13.80px;color:#1E1E1E;font-family:'Liberation Sans', sans-serif;transform:scaleX(0.9944);transform-origin:0 0;">image</span>
<span style="left:400.2px;top:673px;font-size:12px;line-height:13.80px;color:#1E1E1E;font-family:'Liberation Sans', sans-serif;transform:scaleX(0.9639);transform-origin:0 0;">key</span>
<span style="left:469.8px;top:656px;font-size:12px;line-height:13.80px;color:#1E1E1E;font-family:'Liberation Sans', sans-serif;transform:scaleX(0.9655);transform-origin:0 0;">{flags=1124024336 dims=2 rows=480 ..</span>
<span style="left:469.8px;top:673px;font-size:12px;line-height:13.80px;color:#1E1E1E;font-family:'Liberation Sans', sans-serif;transform:scaleX(1.0317);transform-origin:0 0;">-52 &#x27;Ì&#x27;</span>
<span style="left:679.7px;top:656px;font-size:12px;line-height:13.80px;color:#1E1E1E;font-family:'Liberation Sans', sans-serif;transform:scaleX(0.9645);transform-origin:0 0;">cv::Mat</span>
<span style="left:679.7px;top:673px;font-size:12px;line-height:13.80px;color:#1E1E1E;font-family:'Liberation Sans', sans-serif;transform:scaleX(0.9253);transform-origin:0 0;">char</span>
<span style="left:358.3px;top:744px;font-size:12px;line-height:13.80px;color:#1E1E1E;font-family:'Liberation Sans', sans-serif;transform:scaleX(0.9939);transform-origin:0 0;">Autos</span>
<div style="left:393px;top:741px;width:1px;height:18px;background:#CCCEDB;"></div>
<span style="left:399.3px;top:744px;font-size:12px;line-height:13.80px;color:#1E1E1E;font-family:'Liberation Sans', sans-serif;transform:scaleX(0.9427);transform-origin:0 0;">Locals</span>
<div style="left:437px;top:741px;width:1px;height:18px;background:#CCCEDB;"></div>
<span style="left:442.5px;top:744px;font-size:12px;line-height:13.80px;color:#1E1E1E;font-family:'Liberation Sans', sans-serif;transform:scaleX(0.9473);transform-origin:0 0;">Threads</span>
<div style="left:489px;top:741px;width:1px;height:18px;background:#CCCEDB;"></div>
<span style="left:494px;top:744px;font-size:12px;line-height:13.80px;color:#1E1E1E;font-family:'Liberation Sans', sans-serif;transform:scaleX(1.0053);transform-origin:0 0;">Modules</span>
<div style="left:545px;top:741px;width:1px;height:18px;background:#CCCEDB;"></div>
<div style="left:545px;top:740px;width:52px;height:20px;background:#F6F6F6;"></div>
<span style="left:550px;top:744px;font-size:12px;line-height:13.80px;color:#0E70C0;font-family:'Liberation Sans', sans-serif;transform:scaleX(0.9685);transform-origin:0 0;">Watch 1</span>
<div style="left:597px;top:741px;width:1px;height:18px;background:#CCCEDB;"></div>
<div style="left:743px;top:612px;width:1px;height:148px;background:#E2E2E8;"></div>
<span style="left:750.4px;top:617px;font-size:12px;line-height:13.80px;color:#1E1E1E;font-family:'Liberation Sans', sans-serif;transform:scaleX(0.9312);transform-origin:0 0;">Call Stack</span>
<div style="left:808px;top:620px;width:276px;height:5px;background-image:radial-gradient(circle at 0.5px 0.5px,#A8A8B0 0.6px,transparent 0.8px);background-size:4px 4px"></div>
<div style="left:810px;top:622px;width:274px;height:3px;background-image:radial-gradient(circle at 0.5px 0.5px,#A8A8B0 0.6px,transparent 0.8px);background-size:4px 4px"></div>
<svg style="left:1091px;top:620px" width="9" height="5" viewBox="0 0 9 5"><path d="M0,0 H8 L4,4 Z" fill="#1E1E1E"/></svg>
<svg style="left:1107px;top:617px" width="9" height="11" viewBox="0 0 9 11"><path d="M2,0.5 H7 V6 H8.5 V7 H5 V11 H4 V7 H0.5 V6 H2 Z M3,1.5 V6 H6 V1.5 Z" fill="#1E1E1E" fill-rule="evenodd"/><rect x="5" y="1" width="1" height="5" fill="#1E1E1E"/></svg>
<svg style="left:1123.5px;top:618px" width="10" height="10" viewBox="0 0 10 10"><path d="M1,1 L9,9 M9,1 L1,9" stroke="#1E1E1E" stroke-width="1.6"/></svg>
<div style="left:746px;top:633px;width:376px;height:107px;background:#F6F6F6;"></div>
<div style="left:746px;top:633px;width:1px;height:19px;background:#CCCEDB;"></div>
<div style="left:747px;top:651px;width:375px;height:1px;background:#CCCEDB;"></div>
<div style="left:762px;top:633px;width:1px;height:18px;background:#CCCEDB;"></div>
<div style="left:1092px;top:633px;width:1px;height:18px;background:#CCCEDB;"></div>
<span style="left:768.3px;top:637px;font-size:12px;line-height:13.80px;color:#1E1E1E;font-family:'Liberation Sans', sans-serif;transform:scaleX(0.9060);transform-origin:0 0;">Name</span>
<span style="left:1098.8px;top:637px;font-size:12px;line-height:13.80px;color:#1E1E1E;font-family:'Liberation Sans', sans-serif;transform:scaleX(0.8616);transform-origin:0 0;width:23px;overflow:hidden">Lang</span>
<div style="left:1122px;top:633px;width:17px;height:107px;background:#EEEEEF;"></div>
<svg style="left:1125px;top:639px" width="11" height="7" viewBox="0 0 11 7"><path d="M0.5,6 L5,0.5 L9.5,6 Z" fill="#868999"/></svg>
<div style="left:1126px;top:650px;width:9px;height:52px;background:#D5D5D5;"></div>
<svg style="left:1125px;top:729px" width="11" height="6" viewBox="0 0 11 6"><path d="M0.5,0.5 H9.5 L5,5.5 Z" fill="#868999"/></svg>
<div style="left:747px;top:655px;width:15px;height:15px;background:#E6E6E6;"></div>
<svg style="left:748px;top:656px" width="13" height="13" viewBox="0 0 13 13"><circle cx="6.3" cy="6.2" r="5.6" fill="#F00000"/><path d="M2,3.8 H6.4 V1.7 L11.7,6.2 L6.4,10.7 V8.6 H2 Z" fill="#FFE13C" stroke="#30373D" stroke-width="0.9"/></svg>
<span style="left:767.4px;top:656px;font-size:12px;line-height:13.80px;color:#1E1E1E;font-family:'Liberation Sans', sans-serif;transform:scaleX(0.9573);transform-origin:0 0;">Lab1_Part0.exe!main(int argc, char * * argv) Line 39</span>
<div style="left:1097.5px;top:654px;width:24px;height:16px;overflow:hidden">
<span style="left:0px;top:2px;font-size:12px;line-height:13.8px;color:#1E1E1E;font-family:'Liberation Sans',sans-serif;transform:scaleX(0.955);transform-origin:0 0">C++</span>
</div>
<span style="left:767.4px;top:673px;font-size:12px;line-height:13.80px;color:#1E1E1E;font-family:'Liberation Sans', sans-serif;transform:scaleX(0.9333);transform-origin:0 0;">Lab1_Part0.exe!__tmainCRTStartup() Line 536</span>
<div style="left:1097.5px;top:671px;width:24px;height:16px;overflow:hidden">
<span style="left:0px;top:2px;font-size:12px;line-height:13.8px;color:#1E1E1E;font-family:'Liberation Sans',sans-serif;transform:scaleX(0.955);transform-origin:0 0">C</span>
</div>
<span style="left:767.4px;top:690px;font-size:12px;line-height:13.80px;color:#1E1E1E;font-family:'Liberation Sans', sans-serif;transform:scaleX(0.9395);transform-origin:0 0;">Lab1_Part0.exe!mainCRTStartup() Line 377</span>
<div style="left:1097.5px;top:688px;width:24px;height:16px;overflow:hidden">
<span style="left:0px;top:2px;font-size:12px;line-height:13.8px;color:#1E1E1E;font-family:'Liberation Sans',sans-serif;transform:scaleX(0.955);transform-origin:0 0">C</span>
</div>
<span style="left:767.4px;top:707px;font-size:12px;line-height:13.80px;color:#808080;font-family:'Liberation Sans', sans-serif;transform:scaleX(0.9533);transform-origin:0 0;">kernel32.dll!75b1336a()</span>
<div style="left:1097.5px;top:705px;width:24px;height:16px;overflow:hidden">
<span style="left:0px;top:2px;font-size:12px;line-height:13.8px;color:#808080;font-family:'Liberation Sans',sans-serif;transform:scaleX(0.955);transform-origin:0 0">Unknown</span>
</div>
<div style="left:767px;top:722px;width:325px;height:16px;overflow:hidden">
<span style="left:0.4px;top:2px;font-size:12px;line-height:13.8px;color:#808080;font-family:'Liberation Sans',sans-serif;transform:scaleX(0.994);transform-origin:0 0">[Frames below may be incorrect and/or missing, no symbols loaded for kernel32.dll]</span>
</div>
<div style="left:746px;top:740px;width:61px;height:20px;background:#F6F6F6;"></div>
<span style="left:751.6px;top:744px;font-size:12px;line-height:13.80px;color:#0E70C0;font-family:'Liberation Sans', sans-serif;transform:scaleX(0.9367);transform-origin:0 0;">Call Stack</span>
<div style="left:807px;top:741px;width:1px;height:18px;background:#CCCEDB;"></div>
<span style="left:812px;top:744px;font-size:12px;line-height:13.80px;color:#1E1E1E;font-family:'Liberation Sans', sans-serif;transform:scaleX(0.9721);transform-origin:0 0;">Breakpoints</span>
<div style="left:879px;top:741px;width:1px;height:18px;background:#CCCEDB;"></div>
<span style="left:884px;top:744px;font-size:12px;line-height:13.80px;color:#1E1E1E;font-family:'Liberation Sans', sans-serif;transform:scaleX(1.0576);transform-origin:0 0;">Output</span>
<div style="left:0px;top:766px;width:1141px;height:24px;background:#CA5100;"></div>
<span style="left:3.2px;top:772px;font-size:12px;line-height:13.80px;color:#FFFFFF;font-family:'Liberation Sans', sans-serif;transform:scaleX(0.9081);transform-origin:0 0;">Ready</span>
<span style="left:773.4px;top:772px;font-size:12px;line-height:13.80px;color:#FFFFFF;font-family:'Liberation Sans', sans-serif;transform:scaleX(0.9024);transform-origin:0 0;">Ln 39</span>
<span style="left:865.5px;top:772px;font-size:12px;line-height:13.80px;color:#FFFFFF;font-family:'Liberation Sans', sans-serif;transform:scaleX(0.9225);transform-origin:0 0;">Col 33</span>
<span style="left:957.2px;top:772px;font-size:12px;line-height:13.80px;color:#FFFFFF;font-family:'Liberation Sans', sans-serif;transform:scaleX(0.8994);transform-origin:0 0;">Ch 33</span>
<span style="left:1092.2px;top:772px;font-size:12px;line-height:13.80px;color:#FFFFFF;font-family:'Liberation Sans', sans-serif;transform:scaleX(0.9298);transform-origin:0 0;">INS</span>
<svg style="left:1126px;top:776px" width="15" height="14" viewBox="0 0 15 14"><rect x="13" y="1" width="1.2" height="1.2" fill="#F4C9A8"/><rect x="12" y="0" width="1.2" height="1.2" fill="#8A3A00"/><rect x="11" y="3" width="1.2" height="1.2" fill="#F4C9A8"/><rect x="10" y="2" width="1.2" height="1.2" fill="#8A3A00"/><rect x="13" y="3" width="1.2" height="1.2" fill="#F4C9A8"/><rect x="12" y="2" width="1.2" height="1.2" fill="#8A3A00"/><rect x="9" y="5" width="1.2" height="1.2" fill="#F4C9A8"/><rect x="8" y="4" width="1.2" height="1.2" fill="#8A3A00"/><rect x="11" y="5" width="1.2" height="1.2" fill="#F4C9A8"/><rect x="10" y="4" width="1.2" height="1.2" fill="#8A3A00"/><rect x="13" y="5" width="1.2" height="1.2" fill="#F4C9A8"/><rect x="12" y="4" width="1.2" height="1.2" fill="#8A3A00"/><rect x="7" y="7" width="1.2" height="1.2" fill="#F4C9A8"/><rect x="6" y="6" width="1.2" height="1.2" fill="#8A3A00"/><rect x="9" y="7" width="1.2" height="1.2" fill="#F4C9A8"/><rect x="8" y="6" width="1.2" height="1.2" fill="#8A3A00"/><rect x="11" y="7" width="1.2" height="1.2" fill="#F4C9A8"/><rect x="10" y="6" width="1.2" height="1.2" fill="#8A3A00"/><rect x="13" y="7" width="1.2" height="1.2" fill="#F4C9A8"/><rect x="12" y="6" width="1.2" height="1.2" fill="#8A3A00"/></svg>
<div style="left:894px;top:97px;width:92px;height:22px;border:1px solid #767676;border-radius:2px;box-sizing:border-box;background:linear-gradient(#FFFFFF,#E4E5F0)"></div>
<span style="left:900.2px;top:101px;font-size:12px;line-height:13.80px;color:#575757;font-family:'Liberation Sans', sans-serif;transform:scaleX(0.9206);transform-origin:0 0;">Step Over (F10)</span>
<svg style="left:895px;top:74px" width="14" height="21" viewBox="0 0 14 21"><path d="M1.4,1.3 V17.3 L5.3,14.2 L8.9,19.4 L10.9,17.9 L8.2,13.4 H12.7 Z" fill="#FFFFFF" stroke="#000" stroke-width="1.1" stroke-linejoin="round"/></svg>
</body></html>
